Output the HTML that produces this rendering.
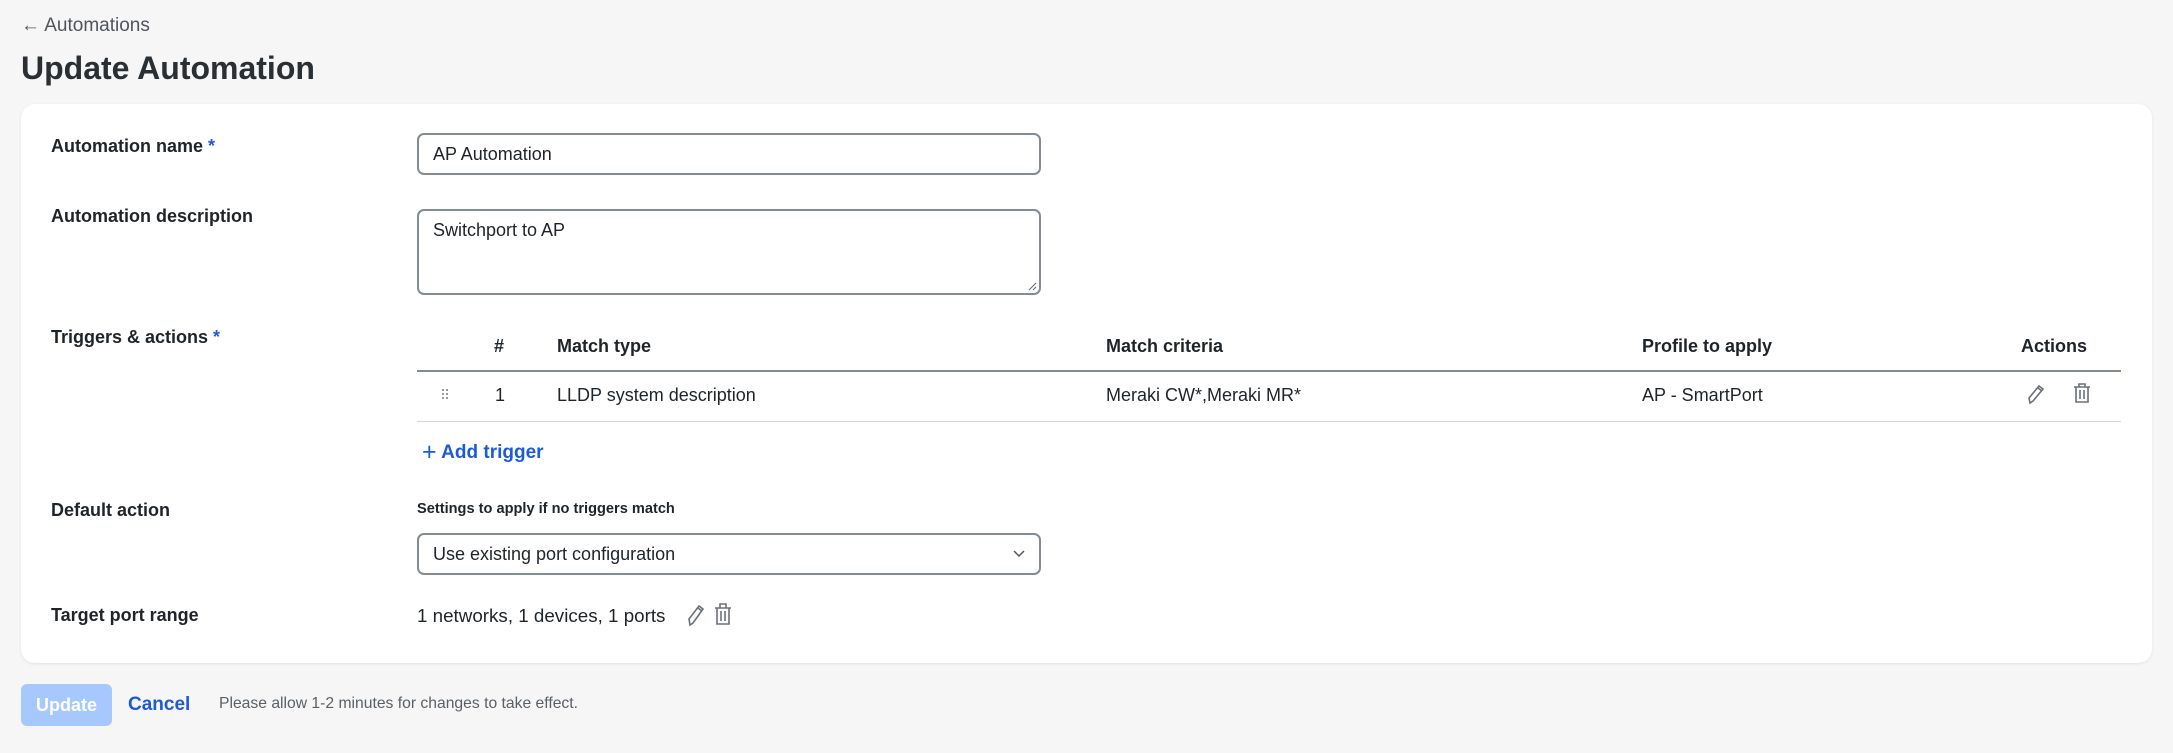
<!DOCTYPE html>
<html><head><meta charset="utf-8"><style>
*{box-sizing:border-box;margin:0;padding:0}
body{width:2173px;height:753px;background:#f6f6f6;font-family:"Liberation Sans",sans-serif;color:#1f2429;position:relative;overflow:hidden}
.a{position:absolute;white-space:nowrap}
.lbl{font-weight:bold;font-size:18px;left:51px}
.star{color:#1d5bd6}
.box{position:absolute;border:2px solid #838b94;border-radius:7px;background:#fff;font-size:18px;padding-left:14px}
.th{font-weight:bold;font-size:18px;top:336px}
.td{font-size:18px;top:385px}
</style></head><body>
<div class="a" style="left:21px;top:15px;font-size:19px;color:#4e555c">&#8592; Automations</div>
<div class="a" style="left:21px;top:50px;font-size:32px;font-weight:bold;color:#2a2f34">Update Automation</div>
<div style="position:absolute;left:21px;top:104px;width:2131px;height:559px;background:#fff;border-radius:14px;box-shadow:0 1px 3px rgba(0,0,0,0.08)"></div>

<div class="a lbl" style="top:136px">Automation name <span class="star">*</span></div>
<div class="box" style="left:417px;top:133px;width:624px;height:42px;line-height:38px">AP Automation</div>

<div class="a lbl" style="top:206px">Automation description</div>
<div class="box" style="left:417px;top:209px;width:624px;height:86px;padding-top:9px">Switchport to AP
<svg style="position:absolute;right:2px;bottom:2px" width="9" height="9"><path d="M1 8L8 1M5 8L8 5" stroke="#666" stroke-width="1"/></svg></div>

<div class="a lbl" style="top:327px">Triggers &amp; actions <span class="star">*</span></div>
<div class="a th" style="left:494px">#</div>
<div class="a th" style="left:557px">Match type</div>
<div class="a th" style="left:1106px">Match criteria</div>
<div class="a th" style="left:1642px">Profile to apply</div>
<div class="a th" style="left:2021px">Actions</div>
<div style="position:absolute;left:417px;top:370px;width:1704px;height:2px;background:#838b94"></div>
<svg class="a" style="left:441px;top:388px" width="8" height="12"><g fill="#777"><circle cx="2" cy="2" r="1"/><circle cx="6" cy="2" r="1"/><circle cx="2" cy="6" r="1"/><circle cx="6" cy="6" r="1"/><circle cx="2" cy="10" r="1"/><circle cx="6" cy="10" r="1"/></g></svg>
<div class="a td" style="left:495px">1</div>
<div class="a td" style="left:557px">LLDP system description</div>
<div class="a td" style="left:1106px">Meraki CW*,Meraki MR*</div>
<div class="a td" style="left:1642px">AP - SmartPort</div>
<svg class="a" style="left:2026px;top:383px" width="20" height="22" fill="none" stroke="#6b7178" stroke-width="1.6"><path d="M4 20L3 15L13 3L17 6L7 18Z M12 5L16 8"/></svg>
<svg class="a" style="left:2072px;top:382px" width="20" height="22" fill="none" stroke="#6b7178" stroke-width="1.6"><path d="M2 5H18M7 5V2H13V5M4 5V20H16V5M8 8V17M12 8V17"/></svg>
<div style="position:absolute;left:417px;top:421px;width:1704px;height:1px;background:#d6d6d6"></div>

<div class="a" style="left:422px;top:438px;font-size:19px;font-weight:bold;color:#1d5bd6"><span style="font-size:25px;font-weight:normal;vertical-align:-2px">+</span> Add trigger</div>

<div class="a lbl" style="top:500px">Default action</div>
<div class="a" style="left:417px;top:501px;font-size:14.6px;font-weight:bold">Settings to apply if no triggers match</div>
<div class="box" style="left:417px;top:533px;width:624px;height:42px;line-height:38px">Use existing port configuration
<svg style="position:absolute;right:14px;top:15px" width="12" height="8" fill="none" stroke="#555" stroke-width="1.5"><path d="M1 1L6 6L11 1"/></svg></div>

<div class="a lbl" style="top:605px">Target port range</div>
<div class="a" style="left:417px;top:605px;font-size:18.8px">1 networks, 1 devices, 1 ports</div>
<svg class="a" style="left:686px;top:603px" width="20" height="24" fill="none" stroke="#6b7178" stroke-width="1.6"><path d="M4 22L3 16L13 3L17 6L7 20Z M12 5L16 8"/></svg>
<svg class="a" style="left:713px;top:602px" width="20" height="24" fill="none" stroke="#6b7178" stroke-width="1.6"><path d="M2 6H18M7 6V2H13V6M4 6V22H16V6M8 9V19M12 9V19"/></svg>

<div class="a" style="left:21px;top:684px;width:91px;height:42px;background:#a6c8ff;border-radius:6px;color:#fff;font-weight:bold;font-size:18px;text-align:center;line-height:42px">Update</div>
<div class="a" style="left:128px;top:694px;font-size:19px;font-weight:bold;color:#1d5bd6">Cancel</div>
<div class="a" style="left:219px;top:695px;font-size:15.7px;color:#5a6067">Please allow 1-2 minutes for changes to take effect.</div>
</body></html>
